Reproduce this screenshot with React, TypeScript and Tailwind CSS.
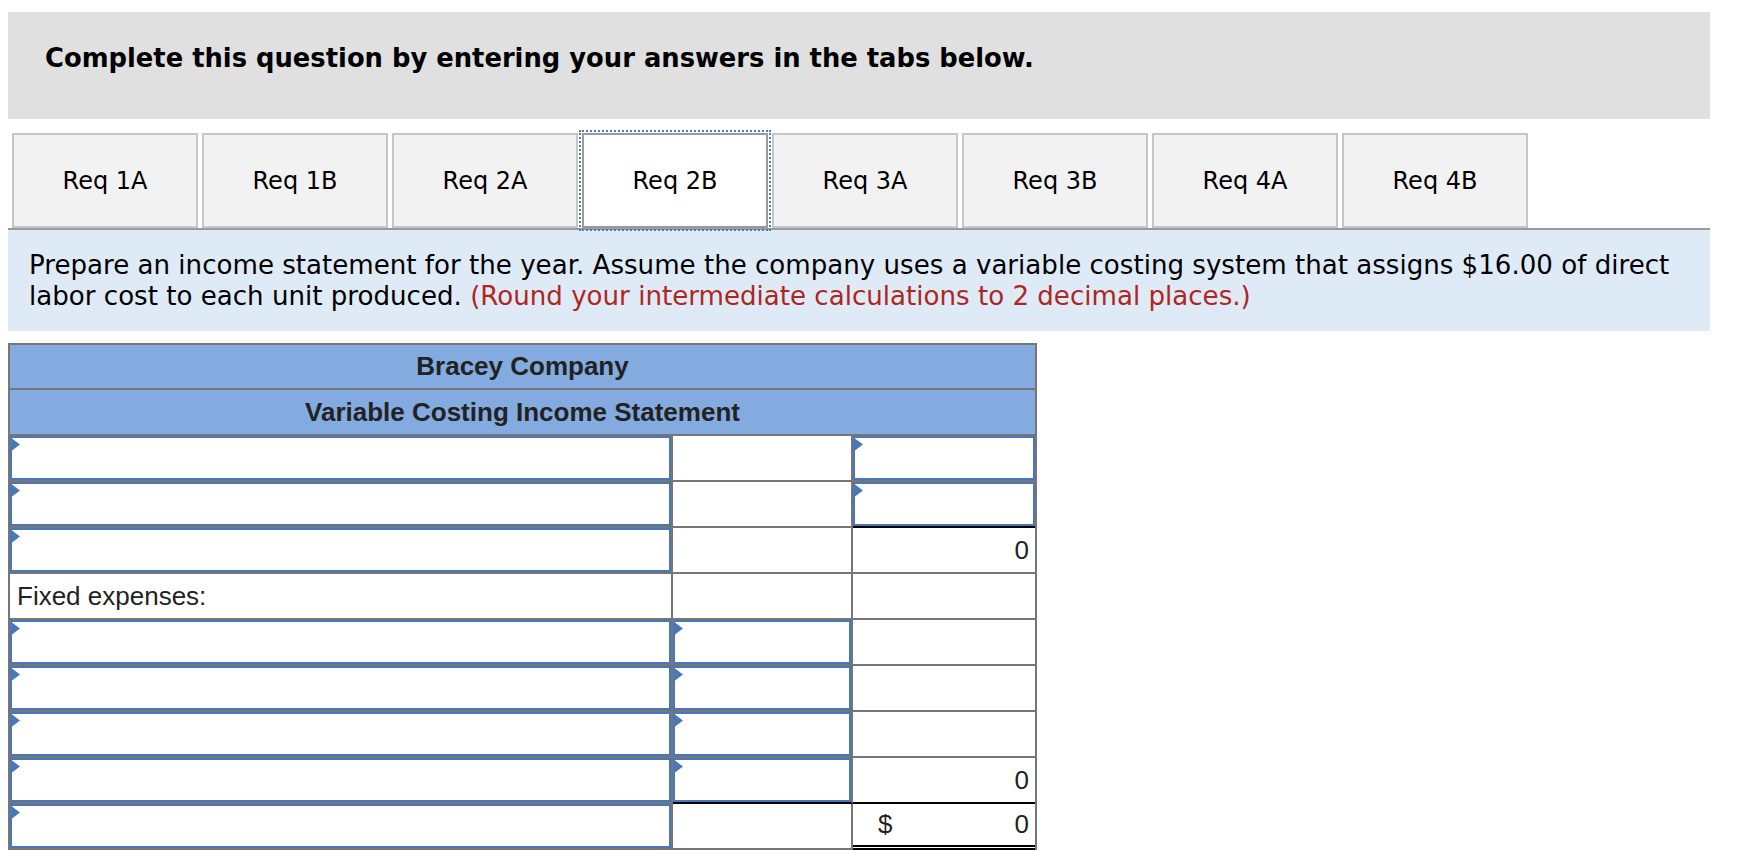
import React from "react";

const Flag = () => (
  <svg
    className="absolute left-[-2px] top-[-1px]"
    width="11"
    height="16"
    viewBox="0 0 11 16"
  >
    <polygon points="0,0 10,7.5 0,15" fill="#4a77bb" />
  </svg>
);

const Input = () => (
  <div className="relative h-full w-full border-2 border-[#4a77bb] bg-white">
    <Flag />
  </div>
);

type Cell =
  | { kind: "input" }
  | { kind: "empty" }
  | { kind: "label"; text: string }
  | { kind: "num"; text: string; dollar?: boolean };

type Row = { cells: [Cell, Cell, Cell]; b2?: "black"; b3?: "black" | "double" };

const I: Cell = { kind: "input" };
const E: Cell = { kind: "empty" };

const rows: Row[] = [
  { cells: [I, E, I] },
  { cells: [I, E, I], b3: "black" },
  { cells: [I, E, { kind: "num", text: "0" }] },
  { cells: [{ kind: "label", text: "Fixed expenses:" }, E, E] },
  { cells: [I, I, E] },
  { cells: [I, I, E] },
  { cells: [I, I, E] },
  { cells: [I, I, { kind: "num", text: "0" }], b2: "black", b3: "black" },
  { cells: [I, E, { kind: "num", text: "0", dollar: true }], b3: "double" },
];

function CellContent({ c }: { c: Cell }) {
  if (c.kind === "input") return <Input />;
  if (c.kind === "label")
    return (
      <div className="flex h-full items-center pl-[7px] text-[26px] text-[#222]">
        {c.text}
      </div>
    );
  if (c.kind === "num")
    return (
      <div className="flex h-full items-center justify-between pl-[25px] pr-[6px] text-[26px] text-[#222]">
        <span>{c.dollar ? "$" : ""}</span>
        <span>{c.text}</span>
      </div>
    );
  return null;
}

const tabs = ["Req 1A", "Req 1B", "Req 2A", "Req 2B", "Req 3A", "Req 3B", "Req 4A", "Req 4B"];

export default function App() {
  return (
    <div className="h-[862px] w-[1744px] overflow-hidden bg-white pl-[8px] pt-[12px]">
      {/* Header */}
      <div className="flex h-[107px] w-[1702px] items-center bg-[#e0e0e0] pb-[14px] pl-[37px]">
        <h1 className="font-['DejaVu_Sans',Verdana,sans-serif] text-[25.8px] font-bold text-black">
          Complete this question by entering your answers in the tabs below.
        </h1>
      </div>

      {/* Tabs */}
      <div className="mt-[14px] flex h-[95px] gap-[4px] pl-[4px]">
        {tabs.map((t) =>
          t === "Req 2B" ? (
            <div
              key={t}
              className="relative z-10 flex h-[95px] w-[186px] items-center justify-center border-2 border-[#9a9a9a] bg-white font-['DejaVu_Sans',Verdana,sans-serif] text-[24px] text-black outline-2 outline-offset-[1px] outline-dotted outline-[#4a7cc4]"
            >
              {t}
            </div>
          ) : (
            <div
              key={t}
              className="flex h-[95px] w-[186px] items-center justify-center border-2 border-[#c6c6c6] bg-[#f2f2f2] font-['DejaVu_Sans',Verdana,sans-serif] text-[24px] text-black"
            >
              {t}
            </div>
          )
        )}
      </div>

      {/* Instruction */}
      <div className="h-[103px] w-[1702px] border-t-2 border-[#9a9a9a] bg-[#deebf7] pl-[21px] pt-[20px] font-['DejaVu_Sans',Verdana,sans-serif] text-[26.1px] leading-[31px] text-black">
        Prepare an income statement for the year. Assume the company uses a variable costing system that assigns $16.00 of direct
        <br />
        labor cost to each unit produced.{" "}
        <span className="text-[#b0261f]">(Round your intermediate calculations to 2 decimal places.)</span>
      </div>

      {/* Table */}
      <div className="mt-[12px] w-[1029px] border-x-2 border-t-2 border-[#767676] font-['Liberation_Sans',Arial,sans-serif]">
        <div className="flex h-[45px] items-center justify-center border-b-2 border-[#767676] bg-[#83abe0] text-[26px] font-bold text-[#222]">
          Bracey Company
        </div>
        <div className="flex h-[46px] items-center justify-center border-b-2 border-[#767676] bg-[#83abe0] text-[26px] font-bold text-[#222]">
          Variable Costing Income Statement
        </div>
        {rows.map((r, i) => (
          <div key={i} className="flex h-[46px]">
            <div className="h-[46px] w-[663px] border-b-2 border-r-2 border-[#767676]">
              <CellContent c={r.cells[0]} />
            </div>
            <div
              className={
                r.b2 === "black"
                  ? "h-[46px] w-[180px] border-b-2 border-r-2 border-r-[#767676] border-b-black"
                  : "h-[46px] w-[180px] border-b-2 border-r-2 border-[#767676]"
              }
            >
              <CellContent c={r.cells[1]} />
            </div>
            <div
              className={
                r.b3 === "black"
                  ? "h-[46px] w-[182px] border-b-2 border-black"
                  : r.b3 === "double"
                  ? "h-[46px] w-[182px] border-b-[5px] border-double border-black"
                  : "h-[46px] w-[182px] border-b-2 border-[#767676]"
              }
            >
              <CellContent c={r.cells[2]} />
            </div>
          </div>
        ))}
      </div>
    </div>
  );
}
